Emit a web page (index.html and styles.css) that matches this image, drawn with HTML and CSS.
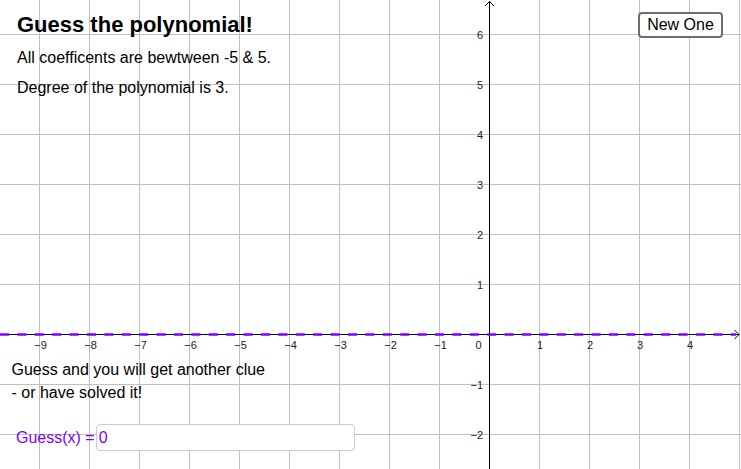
FILE: index.html
```html
<!DOCTYPE html>
<html>
<head>
<meta charset="utf-8">
<link rel="stylesheet" href="styles.css">
</head>
<body>
<div class="stage">
  <svg class="graph" width="741" height="469" viewBox="0 0 741 469" xmlns="http://www.w3.org/2000/svg">
    <g class="grid">
      <line x1="39.5" y1="0" x2="39.5" y2="469"/>
      <line x1="89.5" y1="0" x2="89.5" y2="469"/>
      <line x1="139.5" y1="0" x2="139.5" y2="469"/>
      <line x1="189.5" y1="0" x2="189.5" y2="469"/>
      <line x1="239.5" y1="0" x2="239.5" y2="469"/>
      <line x1="289.5" y1="0" x2="289.5" y2="469"/>
      <line x1="339.5" y1="0" x2="339.5" y2="469"/>
      <line x1="389.5" y1="0" x2="389.5" y2="469"/>
      <line x1="439.5" y1="0" x2="439.5" y2="469"/>
      <line x1="539.5" y1="0" x2="539.5" y2="469"/>
      <line x1="589.5" y1="0" x2="589.5" y2="469"/>
      <line x1="639.5" y1="0" x2="639.5" y2="469"/>
      <line x1="689.5" y1="0" x2="689.5" y2="469"/>
      <line x1="739.5" y1="0" x2="739.5" y2="469"/>
      <line x1="0" y1="34.5" x2="741" y2="34.5"/>
      <line x1="0" y1="84.5" x2="741" y2="84.5"/>
      <line x1="0" y1="134.5" x2="741" y2="134.5"/>
      <line x1="0" y1="184.5" x2="741" y2="184.5"/>
      <line x1="0" y1="234.5" x2="741" y2="234.5"/>
      <line x1="0" y1="284.5" x2="741" y2="284.5"/>
      <line x1="0" y1="384.5" x2="741" y2="384.5"/>
      <line x1="0" y1="434.5" x2="741" y2="434.5"/>
    </g>
    <g class="axes">
      <line x1="0" y1="334.5" x2="739" y2="334.5"/>
      <line x1="489.5" y1="1" x2="489.5" y2="469"/>
      <polyline points="485,6 489.5,1.5 494,6"/>
      <polyline points="734.5,330 739,334.5 734.5,339"/>
    </g>
    <line class="fn" x1="0" y1="334.5" x2="736" y2="334.5"/>
    <g class="xlabels">
      <text x="40.5" y="349">−9</text>
      <text x="90.5" y="349">−8</text>
      <text x="140.5" y="349">−7</text>
      <text x="190.5" y="349">−6</text>
      <text x="240.5" y="349">−5</text>
      <text x="290.5" y="349">−4</text>
      <text x="340.5" y="349">−3</text>
      <text x="390.5" y="349">−2</text>
      <text x="440.5" y="349">−1</text>
      <text x="478.5" y="349">0</text>
      <text x="540" y="349">1</text>
      <text x="590" y="349">2</text>
      <text x="640" y="349">3</text>
      <text x="690" y="349">4</text>
    </g>
    <g class="ylabels">
      <text x="483" y="38.5">6</text>
      <text x="483" y="88.5">5</text>
      <text x="483" y="138.5">4</text>
      <text x="483" y="188.5">3</text>
      <text x="483" y="238.5">2</text>
      <text x="483" y="288.5">1</text>
      <text x="483" y="388.5">−1</text>
      <text x="483" y="438.5">−2</text>
    </g>
  </svg>

  <div class="intro">
    <h1 class="title">Guess the polynomial!</h1>
    <p class="line line-first">All coefficents are bewtween -5 &amp; 5.</p>
    <p class="line line-second">Degree of the polynomial is 3.</p>
  </div>

  <button class="new-one">New One</button>

  <div class="clue">
    <p class="clue-line">Guess and you will get another clue</p>
    <p class="clue-line">- or have solved it!</p>
  </div>

  <div class="guess">
    <span class="guess-label">Guess(x) =</span>
    <div class="guess-input">0</div>
  </div>
</div>
</body>
</html>
```

FILE: styles.css
```css
html, body {
  margin: 0;
  padding: 0;
  background: #ffffff;
}

.stage {
  position: relative;
  width: 741px;
  height: 469px;
  overflow: hidden;
  background: #ffffff;
  font-family: "Liberation Sans", Arial, sans-serif;
  color: #000000;
}

.graph {
  position: absolute;
  left: 0;
  top: 0;
  display: block;
}

.grid line {
  stroke: #c0c0c0;
  stroke-width: 1;
}

.axes line,
.axes polyline {
  stroke: #000000;
  stroke-width: 1;
  fill: none;
}

.fn {
  stroke: #7f00ff;
  stroke-width: 2.5;
  stroke-dasharray: 9 8.4;
}

.xlabels text,
.ylabels text {
  font-family: "Liberation Sans", Arial, sans-serif;
  font-size: 11px;
  fill: #222222;
}

.xlabels text {
  text-anchor: middle;
}

.ylabels text {
  text-anchor: end;
}

.intro {
  position: absolute;
  left: 17px;
  top: 12px;
}

.title {
  margin: 0;
  font-size: 22px;
  line-height: 26px;
  font-weight: bold;
}

.line {
  margin: 0;
  font-size: 16px;
  line-height: 20px;
}

.line-first {
  margin-top: 10px;
}

.line-second {
  margin-top: 9.5px;
}

.new-one {
  position: absolute;
  left: 638px;
  top: 12px;
  box-sizing: border-box;
  width: 85px;
  height: 26px;
  padding: 0;
  border: 2px solid #6e6e6e;
  border-radius: 4px;
  background: #ffffff;
  font-family: "Liberation Sans", Arial, sans-serif;
  font-size: 16px;
  color: #000000;
  display: flex;
  align-items: center;
  justify-content: center;
}

.clue {
  position: absolute;
  left: 11.5px;
  top: 358px;
}

.clue-line {
  margin: 0;
  font-size: 16px;
  line-height: 23px;
}

.guess {
  position: absolute;
  left: 16px;
  top: 424px;
  display: flex;
  align-items: center;
  gap: 1px;
  color: #7f00ff;
  font-size: 16px;
}

.guess-label {
  line-height: 27px;
}

.guess-input {
  box-sizing: border-box;
  width: 259px;
  height: 27px;
  padding-left: 2px;
  border: 1.5px solid #cccccc;
  border-radius: 4px;
  background: #ffffff;
  line-height: 25px;
}
```
